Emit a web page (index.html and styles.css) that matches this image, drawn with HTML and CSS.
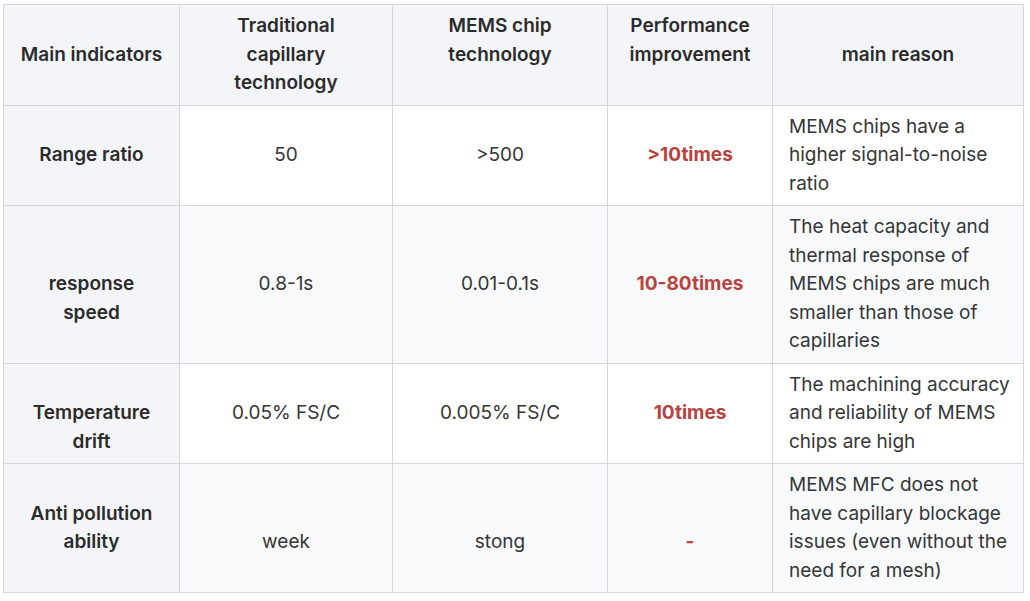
FILE: index.html
```html
<!DOCTYPE html>
<html>
<head>
<meta charset="utf-8">
<link rel="stylesheet" href="styles.css">
</head>
<body>
<table class="cmp">
  <colgroup>
    <col class="c1"><col class="c2"><col class="c3"><col class="c4"><col class="c5">
  </colgroup>
  <thead>
    <tr>
      <th>Main indicators</th>
      <th>Traditional capillary technology</th>
      <th class="up">MEMS chip technology</th>
      <th class="up">Performance improvement</th>
      <th>main reason</th>
    </tr>
  </thead>
  <tbody>
    <tr>
      <th>Range ratio</th>
      <td>50</td>
      <td>&gt;500</td>
      <td class="hl">&gt;10times</td>
      <td class="why">MEMS chips have a higher signal-to-noise ratio</td>
    </tr>
    <tr class="alt">
      <th class="down">response speed</th>
      <td>0.8-1s</td>
      <td>0.01-0.1s</td>
      <td class="hl">10-80times</td>
      <td class="why">The heat capacity and thermal response of MEMS chips are much smaller than those of capillaries</td>
    </tr>
    <tr>
      <th class="down">Temperature drift</th>
      <td>0.05% FS/C</td>
      <td>0.005% FS/C</td>
      <td class="hl">10times</td>
      <td class="why">The machining accuracy and reliability of MEMS chips are high</td>
    </tr>
    <tr class="alt">
      <th>Anti pollution ability</th>
      <td class="down">week</td>
      <td class="down">stong</td>
      <td class="hl down">-</td>
      <td class="why">MEMS MFC does not have capillary blockage issues (even without the need for a mesh)</td>
    </tr>
  </tbody>
</table>
</body>
</html>
```
FILE: styles.css
```css
html, body {
  margin: 0;
  padding: 0;
  background: #ffffff;
}
body {
  padding: 4px 0 0 3px;
  font-family: Inter, "Noto Sans", sans-serif;
  font-size: 19px;
  line-height: 28.5px;
  color: #363636;
}
.cmp {
  border-collapse: collapse;
  table-layout: fixed;
  width: 1020px;
}
.c1 { width: 176px; }
.c2 { width: 213px; }
.c3 { width: 215px; }
.c4 { width: 165px; }
.c5 { width: 251px; }
.cmp th, .cmp td {
  border: 1px solid #d4d6da;
  padding: 7px 16px;
  text-align: center;
  vertical-align: middle;
  background: #ffffff;
}
.cmp th {
  font-weight: 600;
  color: #2b2b2b;
  background: #f4f5f8;
}
.cmp thead th {
  background: #f4f5f8;
}
.cmp tr.alt td {
  background: #f8f9fb;
}
.cmp td.hl {
  color: #b8433e;
  font-weight: 700;
}
.cmp td.why {
  text-align: left;
  padding-right: 10px;
}
.cmp .up {
  padding-bottom: 35.5px;
}
.cmp .down {
  padding-top: 35.5px;
}
```
